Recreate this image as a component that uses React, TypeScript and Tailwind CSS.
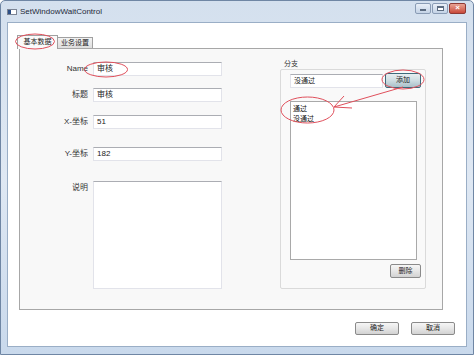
const font = { fontFamily: '"Liberation Sans", "Noto Sans CJK SC", sans-serif' }

function Field({ value, className = '' }: { value?: string; className?: string }) {
  return (
    <div
      className={`h-[14px] w-[129px] bg-white border border-[#e2e3ea] border-t-[#abadb3] px-[3px] text-[8px] leading-[12px] text-[#222] ${className}`}
    >
      {value}
    </div>
  )
}

function Button({ label, className = '' }: { label: string; className?: string }) {
  return (
    <div
      className={`flex items-center justify-center rounded-[2px] border border-[#8a8a8a] bg-linear-to-b from-[#f6f6f6] via-[#e6e6e6] to-[#d2d2d2] text-[7px] text-[#222] ${className}`}
    >
      {label}
    </div>
  )
}

function Row({ label, value, className = '' }: { label: string; value?: string; className?: string }) {
  return (
    <div className={`flex items-center ${className}`}>
      <div className="w-[73px] pr-[5px] text-right text-[8px] text-[#333]">{label}</div>
      <Field value={value} />
    </div>
  )
}

function CaptionButtons() {
  return (
    <div className="flex items-start gap-[1px] mt-[-7px]">
      <div className="flex h-[11px] w-[16px] items-center justify-center rounded-[2px] border border-[#8a9cb5] bg-linear-to-b from-[#e9eff7] to-[#c4d3e6]">
        <div className="mt-[3px] h-[2px] w-[6px] bg-white border border-[#5b6b80]" />
      </div>
      <div className="flex h-[11px] w-[16px] items-center justify-center rounded-[2px] border border-[#8a9cb5] bg-linear-to-b from-[#e9eff7] to-[#c4d3e6]">
        <div className="h-[5px] w-[7px] border border-[#5b6b80] border-t-2 bg-white" />
      </div>
      <div className="flex h-[11px] w-[17px] items-center justify-center rounded-[2px] border border-[#8e3a34] bg-linear-to-b from-[#e8a293] to-[#c8483a] text-[8px] font-bold leading-none text-white">
        ×
      </div>
    </div>
  )
}

export default function App() {
  return (
    <div className="relative h-[355px] w-[474px] bg-white" style={font}>
      <div className="flex h-full flex-col rounded-t-[5px] border border-[#6f86a4] bg-linear-to-b from-[#d4e0ee] via-[#dfe8f3] to-[#c9d9ec]">
        {/* title bar */}
        <div className="flex h-[21px] shrink-0 items-center pl-[6px] pr-[7px]">
          <div className="flex h-[6px] w-[10px] border border-[#7b8494] bg-white">
            <div className="w-[3px] bg-[#2d4f86]" />
          </div>
          <span className="ml-[3px] text-[8px] text-[#1e2a3a]">SetWindowWaitControl</span>
          <div className="flex-1" />
          <CaptionButtons />
        </div>

        {/* client area */}
        <div className="mx-[6px] mb-[7px] flex flex-1 flex-col border border-[#9aaec6] bg-white">
          <div className="flex h-[25px] shrink-0 items-end pl-[9px] pt-[12px]">
            <div className="relative z-10 mb-[-1px] flex h-[14px] w-[41px] items-center justify-center border border-b-0 border-[#a0a0a0] bg-[#fafafa] text-[7px] text-[#222]">
              基本数据
            </div>
            <div className="flex h-[11px] w-[35px] items-center justify-center border border-b-0 border-l-0 border-[#a0a0a0] bg-linear-to-b from-[#f3f3f3] to-[#dedede] text-[7px] text-[#222]">
              业务设置
            </div>
          </div>

          {/* tab panel */}
          <div className="ml-[11px] mr-[23px] flex h-[262px] shrink-0 border border-[#a7a7a7] bg-[#f8f8f8]">
            <div className="flex flex-col pt-[13px]">
              <Row label="Name" value="审核" />
              <Row label="标题" value="审核" className="mt-[12px]" />
              <Row label="X-坐标" value="51" className="mt-[13px]" />
              <Row label="Y-坐标" value="182" className="mt-[18px]" />
              <div className="mt-[20px] flex items-start">
                <div className="w-[73px] pr-[5px] pt-[1px] text-right text-[8px] text-[#333]">说明</div>
                <Field className="!h-[108px]" />
              </div>
            </div>

            {/* group box */}
            <div className="ml-[58px] flex flex-col pt-[10px]">
              <div className="ml-[4px] h-[9px] text-[7px] leading-[9px] text-[#333]">分支</div>
              <div className="mt-[1px] flex h-[220px] w-[146px] flex-col rounded-[2px] border border-[#dadada] bg-[#f9f9f9] pl-[9px] pr-[4px] pt-[3px]">
                <div className="flex items-center">
                  <div className="h-[14px] w-[93px] border border-[#e2e3ea] border-t-[#abadb3] bg-white px-[3px] text-[7px] leading-[12px] text-[#222]">
                    没通过
                  </div>
                  <Button
                    label="添加"
                    className="ml-[2px] h-[15px] w-[36px] !border-[#3e6a7a] !from-[#e6eef0] !via-[#cfdde2] !to-[#a9c1c9]"
                  />
                </div>
                <div className="mt-[13px] h-[159px] w-[127px] border border-[#a9a9a9] bg-white px-[2px] pt-[2px] text-[7px] leading-[10px] text-[#111]">
                  <div>通过</div>
                  <div>没通过</div>
                </div>
                <div className="mt-[4px] flex justify-end">
                  <Button label="删除" className="h-[14px] w-[31px]" />
                </div>
              </div>
            </div>
          </div>

          {/* dialog buttons */}
          <div className="mr-[11px] mt-[12px] flex justify-end gap-[12px]">
            <Button label="确定" className="h-[13px] w-[44px]" />
            <Button label="取消" className="h-[13px] w-[44px]" />
          </div>
        </div>
      </div>

      {/* red hand-drawn annotations */}
      <svg className="pointer-events-none absolute inset-0 z-20" width="474" height="355" viewBox="0 0 474 355">
        <g fill="none" stroke="#e0505c" strokeWidth="1">
          <ellipse cx="35" cy="41.5" rx="19.5" ry="7.5" />
          <ellipse cx="106" cy="69.5" rx="21.5" ry="7.5" />
          <ellipse cx="403" cy="79.5" rx="21" ry="9.5" />
          <ellipse cx="307.5" cy="110" rx="26.5" ry="13" />
          <path d="M403 87 L334 107" />
          <path d="M334 107 L344 96" />
          <path d="M334 107 L352 108" />
        </g>
      </svg>
    </div>
  )
}
